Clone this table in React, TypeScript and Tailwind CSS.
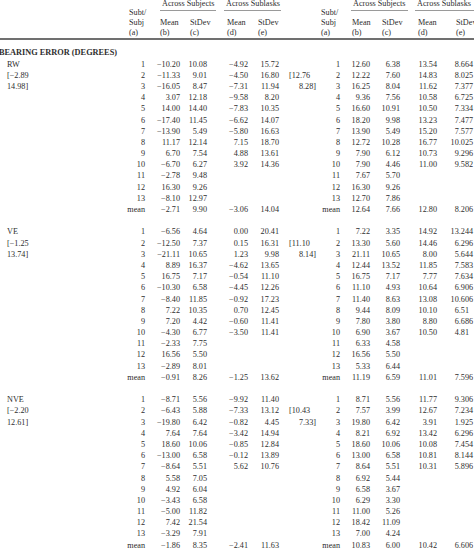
import React from "react";

const COLS =
  "grid grid-cols-[120px_25px_35px_27px_41px_31px_37px_24px_30px_30px_37px_32px]";

type Sec = {
  name: string;
  lo: string;
  hi: string;
  b1: string;
  b2: string;
  rows: string[][];
};

const sections: Sec[] = [
  {
    name: "RW",
    lo: "[−2.89",
    hi: "14.98]",
    b1: "[12.76",
    b2: "8.28]",
    rows: [
      ["1", "−10.20", "10.08", "−4.92", "15.72", "12.60", "6.38", "13.54", "8.66|4"],
      ["2", "−11.33", "9.01", "−4.50", "16.80", "12.22", "7.60", "14.83", "8.02|5"],
      ["3", "−16.05", "8.47", "−7.31", "11.94", "16.25", "8.04", "11.62", "7.37|7"],
      ["4", "3.07", "12.18", "−9.58", "8.20", "9.36", "7.56", "10.58", "6.72|5"],
      ["5", "14.00", "14.40", "−7.83", "10.35", "16.60", "10.91", "10.50", "7.33|4"],
      ["6", "−17.40", "11.45", "−6.62", "14.07", "18.20", "9.98", "13.23", "7.47|7"],
      ["7", "−13.90", "5.49", "−5.80", "16.63", "13.90", "5.49", "15.20", "7.57|7"],
      ["8", "11.17", "12.14", "7.15", "18.70", "12.72", "10.28", "16.77", "10.02|5"],
      ["9", "6.70", "7.54", "4.88", "13.61", "7.90", "6.12", "10.73", "9.29|6"],
      ["10", "−6.70", "6.27", "3.92", "14.36", "7.90", "4.46", "11.00", "9.58|2"],
      ["11", "−2.78", "9.48", "", "", "7.67", "5.70", "", ""],
      ["12", "16.30", "9.26", "", "", "16.30", "9.26", "", ""],
      ["13", "−8.10", "12.97", "", "", "12.70", "7.86", "", ""],
      ["mean", "−2.71", "9.90", "−3.06", "14.04", "12.64", "7.66", "12.80", "8.20|6"],
    ],
  },
  {
    name: "VE",
    lo: "[−1.25",
    hi: "13.74]",
    b1: "[11.10",
    b2: "8.14]",
    rows: [
      ["1", "−6.56", "4.64", "0.00", "20.41", "7.22", "3.35", "14.92", "13.24|4"],
      ["2", "−12.50", "7.37", "0.15", "16.31", "13.30", "5.60", "14.46", "6.29|6"],
      ["3", "−21.11", "10.65", "1.23", "9.98", "21.11", "10.65", "8.00", "5.64|4"],
      ["4", "8.89", "16.37", "−4.62", "13.65", "12.44", "13.52", "11.85", "7.58|3"],
      ["5", "16.75", "7.17", "−0.54", "11.10", "16.75", "7.17", "7.77", "7.63|4"],
      ["6", "−10.30", "6.58", "−4.45", "12.26", "11.10", "4.93", "10.64", "6.90|6"],
      ["7", "−8.40", "11.85", "−0.92", "17.23", "11.40", "8.63", "13.08", "10.60|6"],
      ["8", "7.22", "10.35", "0.70", "12.45", "9.44", "8.09", "10.10", "6.51"],
      ["9", "7.20", "4.42", "−0.60", "11.41", "7.80", "3.80", "8.80", "6.68|6"],
      ["10", "−4.30", "6.77", "−3.50", "11.41", "6.90", "3.67", "10.50", "4.81"],
      ["11", "−2.33", "7.75", "", "", "6.33", "4.58", "", ""],
      ["12", "16.56", "5.50", "", "", "16.56", "5.50", "", ""],
      ["13", "−2.89", "8.01", "", "", "5.33", "6.44", "", ""],
      ["mean", "−0.91", "8.26", "−1.25", "13.62", "11.19", "6.59", "11.01", "7.59|6"],
    ],
  },
  {
    name: "NVE",
    lo: "[−2.20",
    hi: "12.61]",
    b1: "[10.43",
    b2: "7.33]",
    rows: [
      ["1", "−8.71", "5.56", "−9.92", "11.40", "8.71", "5.56", "11.77", "9.30|6"],
      ["2", "−6.43", "5.88", "−7.33", "13.12", "7.57", "3.99", "12.67", "7.23|4"],
      ["3", "−19.80", "6.42", "−0.82", "4.45", "19.80", "6.42", "3.91", "1.92|5"],
      ["4", "7.64", "7.64", "−3.42", "14.94", "8.21", "6.92", "13.42", "6.29|6"],
      ["5", "18.60", "10.06", "−0.85", "12.84", "18.60", "10.06", "10.08", "7.45|4"],
      ["6", "−13.00", "6.58", "−0.12", "13.89", "13.00", "6.58", "10.81", "8.14|4"],
      ["7", "−8.64", "5.51", "5.62", "10.76", "8.64", "5.51", "10.31", "5.89|6"],
      ["8", "5.58", "7.05", "", "", "6.92", "5.44", "", ""],
      ["9", "4.92", "6.04", "", "", "6.58", "3.67", "", ""],
      ["10", "−3.43", "6.58", "", "", "6.29", "3.30", "", ""],
      ["11", "−5.00", "11.82", "", "", "11.00", "5.26", "", ""],
      ["12", "7.42", "21.54", "", "", "18.42", "11.09", "", ""],
      ["13", "−3.29", "7.91", "", "", "7.00", "4.24", "", ""],
      ["mean", "−1.86", "8.35", "−2.41", "11.63", "10.83", "6.00", "10.42", "6.60|6"],
    ],
  },
];

function Last({ v }: { v: string }) {
  if (!v) return null;
  const [base, extra] = v.split("|");
  return (
    <>
      <span>{base}</span>
      {extra ? <span className="inline-block w-0 overflow-visible">{extra}</span> : null}
    </>
  );
}

function Row({ r, i, s }: { r: string[]; i: number; s: Sec }) {
  const label = i === 0 ? s.name : i === 1 ? s.lo : i === 2 ? s.hi : "";
  return (
    <div className={`${COLS} h-[11.2px] leading-[11.2px] items-center whitespace-nowrap`}>
      <div className="pl-[7px]">{label}</div>
      <div className="text-right">{r[0]}</div>
      <div className="text-right">{r[1]}</div>
      <div className="text-right">{r[2]}</div>
      <div className="text-right">{r[3]}</div>
      <div className="text-right">{r[4]}</div>
      <div className={i === 2 ? "text-right" : "pl-[10px]"}>
        {i === 1 ? s.b1 : i === 2 ? s.b2 : ""}
      </div>
      <div className="text-right">{r[0]}</div>
      <div className="text-right">{r[5]}</div>
      <div className="text-right">{r[6]}</div>
      <div className="text-right">{r[7]}</div>
      <div className="text-right">
        <Last v={r[8]} />
      </div>
    </div>
  );
}

export default function App() {
  return (
    <div
      className="w-[474px] h-[549px] overflow-hidden bg-white text-[#2e2e2e] text-[8.2px]"
      style={{ fontFamily: '"Liberation Serif", "Times New Roman", serif' }}
    >
      {/* header */}
      <div className="flex h-[11px] whitespace-nowrap leading-[8px]">
        <div className="ml-[160px] w-[57px] border-b border-[#9a9a9a] pl-[2px]">Across Subjects</div>
        <div className="ml-[8px] w-[58px] border-b border-[#9a9a9a] pl-[2px]">Across Sublasks</div>
        <div className="ml-[70px] w-[58px] border-b border-[#9a9a9a] pl-[2px]">Across Subjects</div>
        <div className="ml-[7px] w-[60px] border-b border-[#9a9a9a] pl-[2px]">Across Sublasks</div>
      </div>
      <div className={`${COLS} h-[27px] whitespace-nowrap leading-[10px]`}>
        <div />
        <div className="-mt-[3.5px] pl-[9px] flex flex-col">
          <span>Subt/</span>
          <span>Subj</span>
          <span>(a)</span>
        </div>
        <div className="pt-[6.5px] pl-[15px] flex flex-col">
          <span>Mean</span>
          <span>(b)</span>
        </div>
        <div className="pt-[6.5px] pl-[10px] flex flex-col">
          <span>StDev</span>
          <span>(c)</span>
        </div>
        <div className="pt-[6.5px] pl-[20px] flex flex-col">
          <span>Mean</span>
          <span>(d)</span>
        </div>
        <div className="pt-[6.5px] pl-[10px] flex flex-col">
          <span>StDev</span>
          <span>(e)</span>
        </div>
        <div />
        <div className="-mt-[3.5px] pl-[5px] flex flex-col">
          <span>Subt/</span>
          <span>Subj</span>
          <span>(a)</span>
        </div>
        <div className="pt-[6.5px] pl-[12px] flex flex-col">
          <span>Mean</span>
          <span>(b)</span>
        </div>
        <div className="pt-[6.5px] pl-[12px] flex flex-col">
          <span>StDev</span>
          <span>(c)</span>
        </div>
        <div className="pt-[6.5px] pl-[18px] flex flex-col">
          <span>Mean</span>
          <span>(d)</span>
        </div>
        <div className="pt-[6.5px] pl-[19px] flex flex-col">
          <span>StDev</span>
          <span>(e)</span>
        </div>
      </div>
      <div className="h-[2px] w-[474px] bg-[#707070]" />

      {/* body */}
      <div className="pt-[7.4px]">
        <div className="h-[11.2px] leading-[11.2px] -ml-[1px] font-bold text-[8.3px] whitespace-nowrap">
          BEARING ERROR (DEGREES)
        </div>
        {sections.map((s, si) => (
          <div key={s.name}>
            {s.rows.map((r, i) => (
              <Row key={i} r={r} i={i} s={s} />
            ))}
            {si < sections.length - 1 ? <div className="h-[11.2px]" /> : null}
          </div>
        ))}
      </div>
    </div>
  );
}
